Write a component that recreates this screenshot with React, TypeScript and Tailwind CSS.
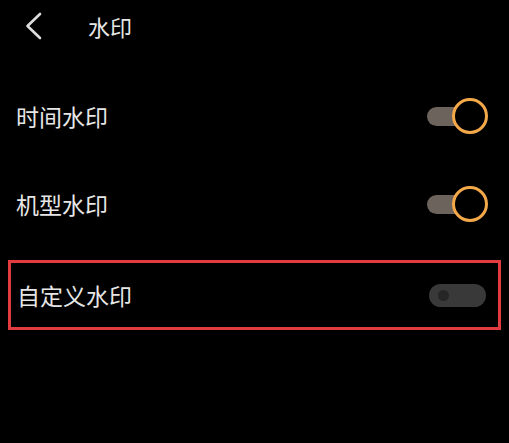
const font = { fontFamily: '"Noto Sans CJK SC", "Noto Sans", sans-serif' }

function OnToggle() {
  return (
    <div className="relative h-[36px] w-[61px]">
      <div className="absolute left-0 top-[9px] h-[19px] w-[44px] rounded-full bg-[#6b635c]" />
      <div className="absolute right-0 top-0 h-[36px] w-[36px] rounded-full border-[3px] border-[#f3a849] bg-black" />
    </div>
  )
}

function OffToggle() {
  return (
    <div className="flex h-[23px] w-[57px] items-center rounded-full bg-[#393939] pl-[9px]">
      <div className="h-[11px] w-[11px] rounded-full bg-[#262626]" />
    </div>
  )
}

export default function App() {
  return (
    <div className="h-[443px] w-[509px] overflow-hidden bg-black text-[#e6e6e6]" style={font}>
      <div className="flex h-[52px] items-center">
        <svg className="ml-[24px] h-[28px] w-[20px]" viewBox="0 0 20 28" fill="none">
          <path d="M16 2 L3.5 14 L16 26" stroke="#dddddd" strokeWidth="2.6" strokeLinecap="round" strokeLinejoin="round" />
        </svg>
        <span className="ml-[44px] text-[22px] leading-none">水印</span>
      </div>

      <div className="mt-[20px] flex h-[88px] items-center justify-between pl-[16px] pr-[21px]">
        <span className="text-[23px] leading-none">时间水印</span>
        <OnToggle />
      </div>
      <div className="flex h-[88px] items-center justify-between pl-[16px] pr-[21px]">
        <span className="text-[23px] leading-none">机型水印</span>
        <OnToggle />
      </div>

      <div className="ml-[8px] mt-[12px] flex h-[70px] w-[493px] items-center justify-between border-[3px] border-[#e23b40] pl-[6px] pr-[12px]">
        <span className="text-[23px] leading-none">自定义水印</span>
        <OffToggle />
      </div>
    </div>
  )
}
